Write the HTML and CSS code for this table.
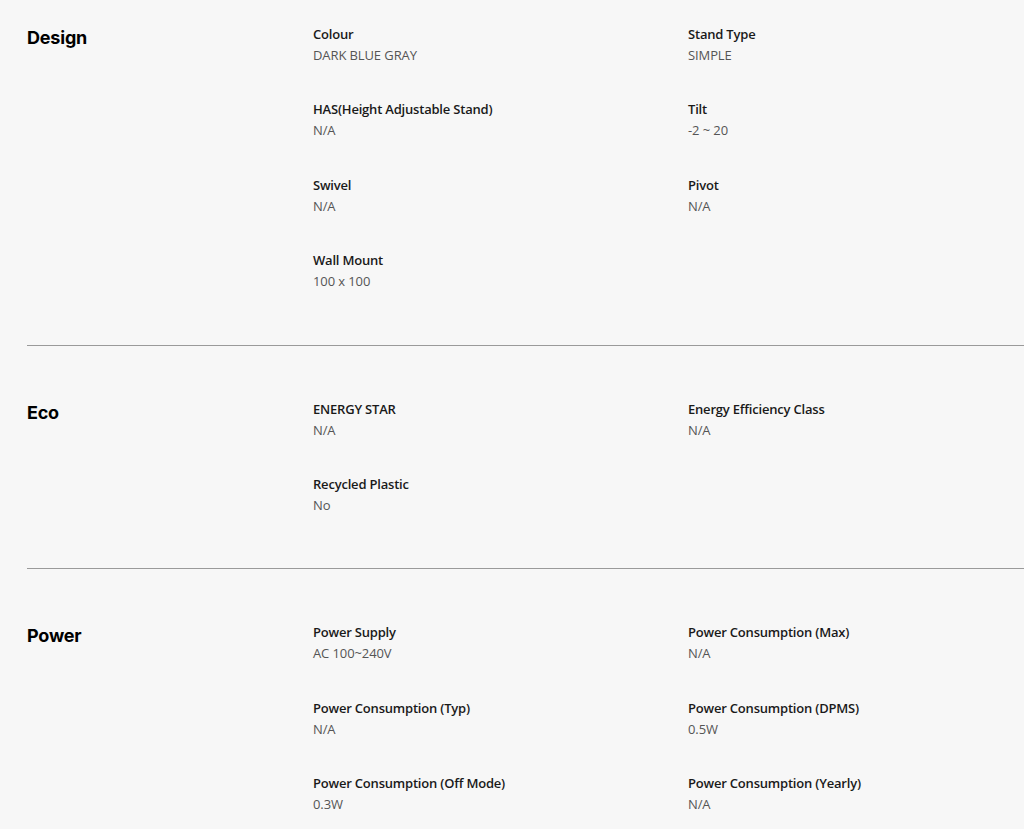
FILE: index.html
```html
<!DOCTYPE html>
<html lang="en">

<head>
    <meta charset="UTF-8">
    <meta name="viewport" content="width=device-width, initial-scale=1.0">
    <title>Specs</title>
    <link rel="stylesheet" href="styles.css">
</head>

<body>
    <div class="specs">
        <!-- Design -->
        <div class="secao primeira">
            <h2 class="titulo">Design</h2>
            <div class="itens">
                <div class="item"><p class="rotulo">Colour</p><p class="valor">DARK BLUE GRAY</p></div>
                <div class="item"><p class="rotulo">Stand Type</p><p class="valor">SIMPLE</p></div>
                <div class="item"><p class="rotulo">HAS(Height Adjustable Stand)</p><p class="valor">N/A</p></div>
                <div class="item"><p class="rotulo">Tilt</p><p class="valor">-2 ~ 20</p></div>
                <div class="item"><p class="rotulo">Swivel</p><p class="valor">N/A</p></div>
                <div class="item"><p class="rotulo">Pivot</p><p class="valor">N/A</p></div>
                <div class="item"><p class="rotulo">Wall Mount</p><p class="valor">100 x 100</p></div>
            </div>
        </div>

        <!-- Eco -->
        <div class="secao">
            <h2 class="titulo">Eco</h2>
            <div class="itens">
                <div class="item"><p class="rotulo">ENERGY STAR</p><p class="valor">N/A</p></div>
                <div class="item"><p class="rotulo">Energy Efficiency Class</p><p class="valor">N/A</p></div>
                <div class="item"><p class="rotulo">Recycled Plastic</p><p class="valor">No</p></div>
            </div>
        </div>

        <!-- Power -->
        <div class="secao">
            <h2 class="titulo">Power</h2>
            <div class="itens">
                <div class="item"><p class="rotulo">Power Supply</p><p class="valor">AC 100~240V</p></div>
                <div class="item"><p class="rotulo">Power Consumption (Max)</p><p class="valor">N/A</p></div>
                <div class="item"><p class="rotulo">Power Consumption (Typ)</p><p class="valor">N/A</p></div>
                <div class="item"><p class="rotulo">Power Consumption (DPMS)</p><p class="valor">0.5W</p></div>
                <div class="item"><p class="rotulo">Power Consumption (Off Mode)</p><p class="valor">0.3W</p></div>
                <div class="item"><p class="rotulo">Power Consumption (Yearly)</p><p class="valor">N/A</p></div>
            </div>
        </div>
    </div>
</body>

</html>
```

FILE: styles.css
```css
* {
    margin: 0;
    padding: 0;
}

body {
    background-color: #f7f7f7;
    font-family: "Open Sans", "Noto Sans", Arial, sans-serif;
    color: #000;
    overflow: hidden;
}

.specs {
    margin-left: 27px;
}

.secao {
    display: flex;
    border-top: 1px solid #9a9a9a;
    padding-top: 53px;
    padding-bottom: 19px;
}

.secao.primeira {
    border-top: none;
    padding-top: 24px;
}

.titulo {
    width: 286px;
    flex-shrink: 0;
    font-family: Inter, "Noto Sans", sans-serif;
    font-size: 18px;
    font-weight: 700;
    letter-spacing: -0.2px;
    line-height: 28px;
}

.itens {
    flex: 1;
    display: grid;
    grid-template-columns: 375px 1fr;
}

.item {
    margin-bottom: 33.4px;
}

.rotulo {
    font-size: 13px;
    font-weight: 600;
    line-height: 20px;
    color: #1a1a1a;
    letter-spacing: -0.2px;
}

.valor {
    font-size: 13px;
    font-weight: 400;
    line-height: 22px;
    color: #555;
    letter-spacing: -0.1px;
}
```
